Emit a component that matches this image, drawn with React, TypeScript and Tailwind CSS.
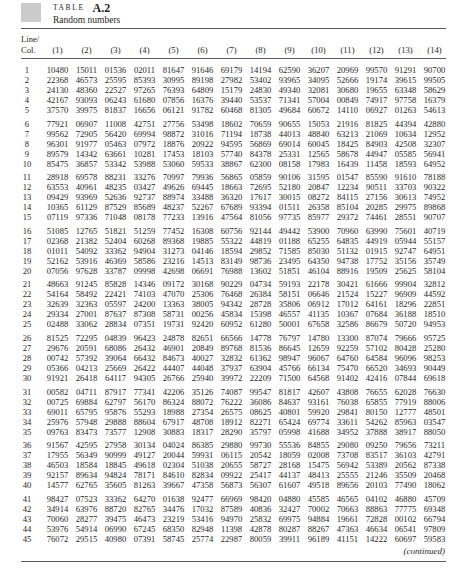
import React from "react";

const DATA: string[] = [
  "10480 15011 01536 02011 81647 91646 69179 14194 62590 36207 20969 99570 91291 90700",
  "22368 46573 25595 85393 30995 89198 27982 53402 93965 34095 52666 19174 39615 99505",
  "24130 48360 22527 97265 76393 64809 15179 24830 49340 32081 30680 19655 63348 58629",
  "42167 93093 06243 61680 07856 16376 39440 53537 71341 57004 00849 74917 97758 16379",
  "37570 39975 81837 16656 06121 91782 60468 81305 49684 60672 14110 06927 01263 54613",
  "77921 06907 11008 42751 27756 53498 18602 70659 90655 15053 21916 81825 44394 42880",
  "99562 72905 56420 69994 98872 31016 71194 18738 44013 48840 63213 21069 10634 12952",
  "96301 91977 05463 07972 18876 20922 94595 56869 69014 60045 18425 84903 42508 32307",
  "89579 14342 63661 10281 17453 18103 57740 84378 25331 12565 58678 44947 05585 56941",
  "85475 36857 53342 53988 53060 59533 38867 62300 08158 17983 16439 11458 18593 64952",
  "28918 69578 88231 33276 70997 79936 56865 05859 90106 31595 01547 85590 91610 78188",
  "63553 40961 48235 03427 49626 69445 18663 72695 52180 20847 12234 90511 33703 90322",
  "09429 93969 52636 92737 88974 33488 36320 17617 30015 08272 84115 27156 30613 74952",
  "10365 61129 87529 85689 48237 52267 67689 93394 01511 26358 85104 20285 29975 89868",
  "07119 97336 71048 08178 77233 13916 47564 81056 97735 85977 29372 74461 28551 90707",
  "51085 12765 51821 51259 77452 16308 60756 92144 49442 53900 70960 63990 75601 40719",
  "02368 21382 52404 60268 89368 19885 55322 44819 01188 65255 64835 44919 05944 55157",
  "01011 54092 33362 94904 31273 04146 18594 29852 71585 85030 51132 01915 92747 64951",
  "52162 53916 46369 58586 23216 14513 83149 98736 23495 64350 94738 17752 35156 35749",
  "07056 97628 33787 09998 42698 06691 76988 13602 51851 46104 88916 19509 25625 58104",
  "48663 91245 85828 14346 09172 30168 90229 04734 59193 22178 30421 61666 99904 32812",
  "54164 58492 22421 74103 47070 25306 76468 26384 58151 06646 21524 15227 96909 44592",
  "32639 32363 05597 24200 13363 38005 94342 28728 35806 06912 17012 64161 18296 22851",
  "29334 27001 87637 87308 58731 00256 45834 15398 46557 41135 10367 07684 36188 18510",
  "02488 33062 28834 07351 19731 92420 60952 61280 50001 67658 32586 86679 50720 94953",
  "81525 72295 04839 96423 24878 82651 66566 14778 76797 14780 13300 87074 79666 95725",
  "29676 20591 68086 26432 46901 20849 89768 81536 86645 12659 92259 57102 80428 25280",
  "00742 57392 39064 66432 84673 40027 32832 61362 98947 96067 64760 64584 96096 98253",
  "05366 04213 25669 26422 44407 44048 37937 63904 45766 66134 75470 66520 34693 90449",
  "91921 26418 64117 94305 26766 25940 39972 22209 71500 64568 91402 42416 07844 69618",
  "00582 04711 87917 77341 42206 35126 74087 99547 81817 42607 43808 76655 62028 76630",
  "00725 69884 62797 56170 86324 88072 76222 36086 84637 93161 76038 65855 77919 88006",
  "69011 65795 95876 55293 18988 27354 26575 08625 40801 59920 29841 80150 12777 48501",
  "25976 57948 29888 88604 67917 48708 18912 82271 65424 69774 33611 54262 85963 03547",
  "09763 83473 73577 12908 30883 18317 28290 35797 05998 41688 34952 37888 38917 88050",
  "91567 42595 27958 30134 04024 86385 29880 99730 55536 84855 29080 09250 79656 73211",
  "17955 56349 90999 49127 20044 59931 06115 20542 18059 02008 73708 83517 36103 42791",
  "46503 18584 18845 49618 02304 51038 20655 58727 28168 15475 56942 53389 20562 87338",
  "92157 89634 94824 78171 84610 82834 09922 25417 44137 48413 25555 21246 35509 20468",
  "14577 62765 35605 81263 39667 47358 56873 56307 61607 49518 89656 20103 77490 18062",
  "98427 07523 33362 64270 01638 92477 66969 98420 04880 45585 46565 04102 46880 45709",
  "34914 63976 88720 82765 34476 17032 87589 40836 32427 70002 70663 88863 77775 69348",
  "70060 28277 39475 46473 23219 53416 94970 25832 69975 94884 19661 72828 00102 66794",
  "53976 54914 06990 67245 68350 82948 11398 42878 80287 88267 47363 46634 06541 97809",
  "76072 29515 40980 07391 58745 25774 22987 80059 39911 96189 41151 14222 60697 59583",
];

const rows = DATA.map((r) => r.split(" "));
const groups = Array.from({ length: 9 }, (_, g) => rows.slice(g * 5, g * 5 + 5));
const cols = Array.from({ length: 14 }, (_, i) => i + 1);

export default function App() {
  return (
    <div
      className="w-[474px] h-[577px] bg-white text-[#262626] overflow-hidden"
      style={{ fontFamily: '"Liberation Serif", "Times New Roman", serif' }}
    >
      <div className="ml-[21px] w-[425px]">
        {/* Title */}
        <div className="h-[28px] pt-[3px] flex">
          <div className="w-[20px] h-[19px] bg-[#cbcbcb]" />
          <div className="ml-[12px] flex flex-col">
            <div className="h-[9px] flex items-center">
              <span className="text-[7.5px] tracking-[1.6px] leading-none">TABLE</span>
              <span className="ml-[8px] text-[12px] font-bold leading-none">A.2</span>
            </div>
            <div className="mt-[3px] h-[11px] leading-[11px] text-[9.5px]">Random numbers</div>
          </div>
        </div>
        <div className="h-[1px] bg-[#5a5a5a]" />

        {/* Column header */}
        <div className="mt-[5px] h-[10px] leading-[10px] text-[8.6px]">Line/</div>
        <div className="mt-[1px] grid grid-cols-[22px_repeat(14,29px)] h-[10px] leading-[10px] text-[8.6px]">
          <div>Col.</div>
          {cols.map((c) => (
            <div key={c} className="text-center">
              ({c})
            </div>
          ))}
        </div>
        <div className="mt-[3px] h-[1px] bg-[#5a5a5a]" />

        {/* Body */}
        <div className="mt-[6px] flex flex-col gap-[3.6px]">
          {groups.map((grp, g) => (
            <div key={g} className="flex flex-col">
              {grp.map((r, i) => {
                const n = g * 5 + i + 1;
                return (
                  <div
                    key={n}
                    className="grid grid-cols-[22px_repeat(14,29px)] h-[10px] leading-[10px] text-[8.6px]"
                  >
                    <div>
                      <div className="w-[12px] text-center">{n}</div>
                    </div>
                    {r.map((v, j) => (
                      <div key={j} className="text-center">
                        {v}
                      </div>
                    ))}
                  </div>
                );
              })}
            </div>
          ))}
        </div>

        {/* Footer */}
        <div className="mt-[2px] h-[10px] leading-[10px] text-[9px] text-right italic pr-[1px]">
          (continued)
        </div>
        <div className="mt-[5px] h-[1px] bg-[#5a5a5a]" />
      </div>
    </div>
  );
}
